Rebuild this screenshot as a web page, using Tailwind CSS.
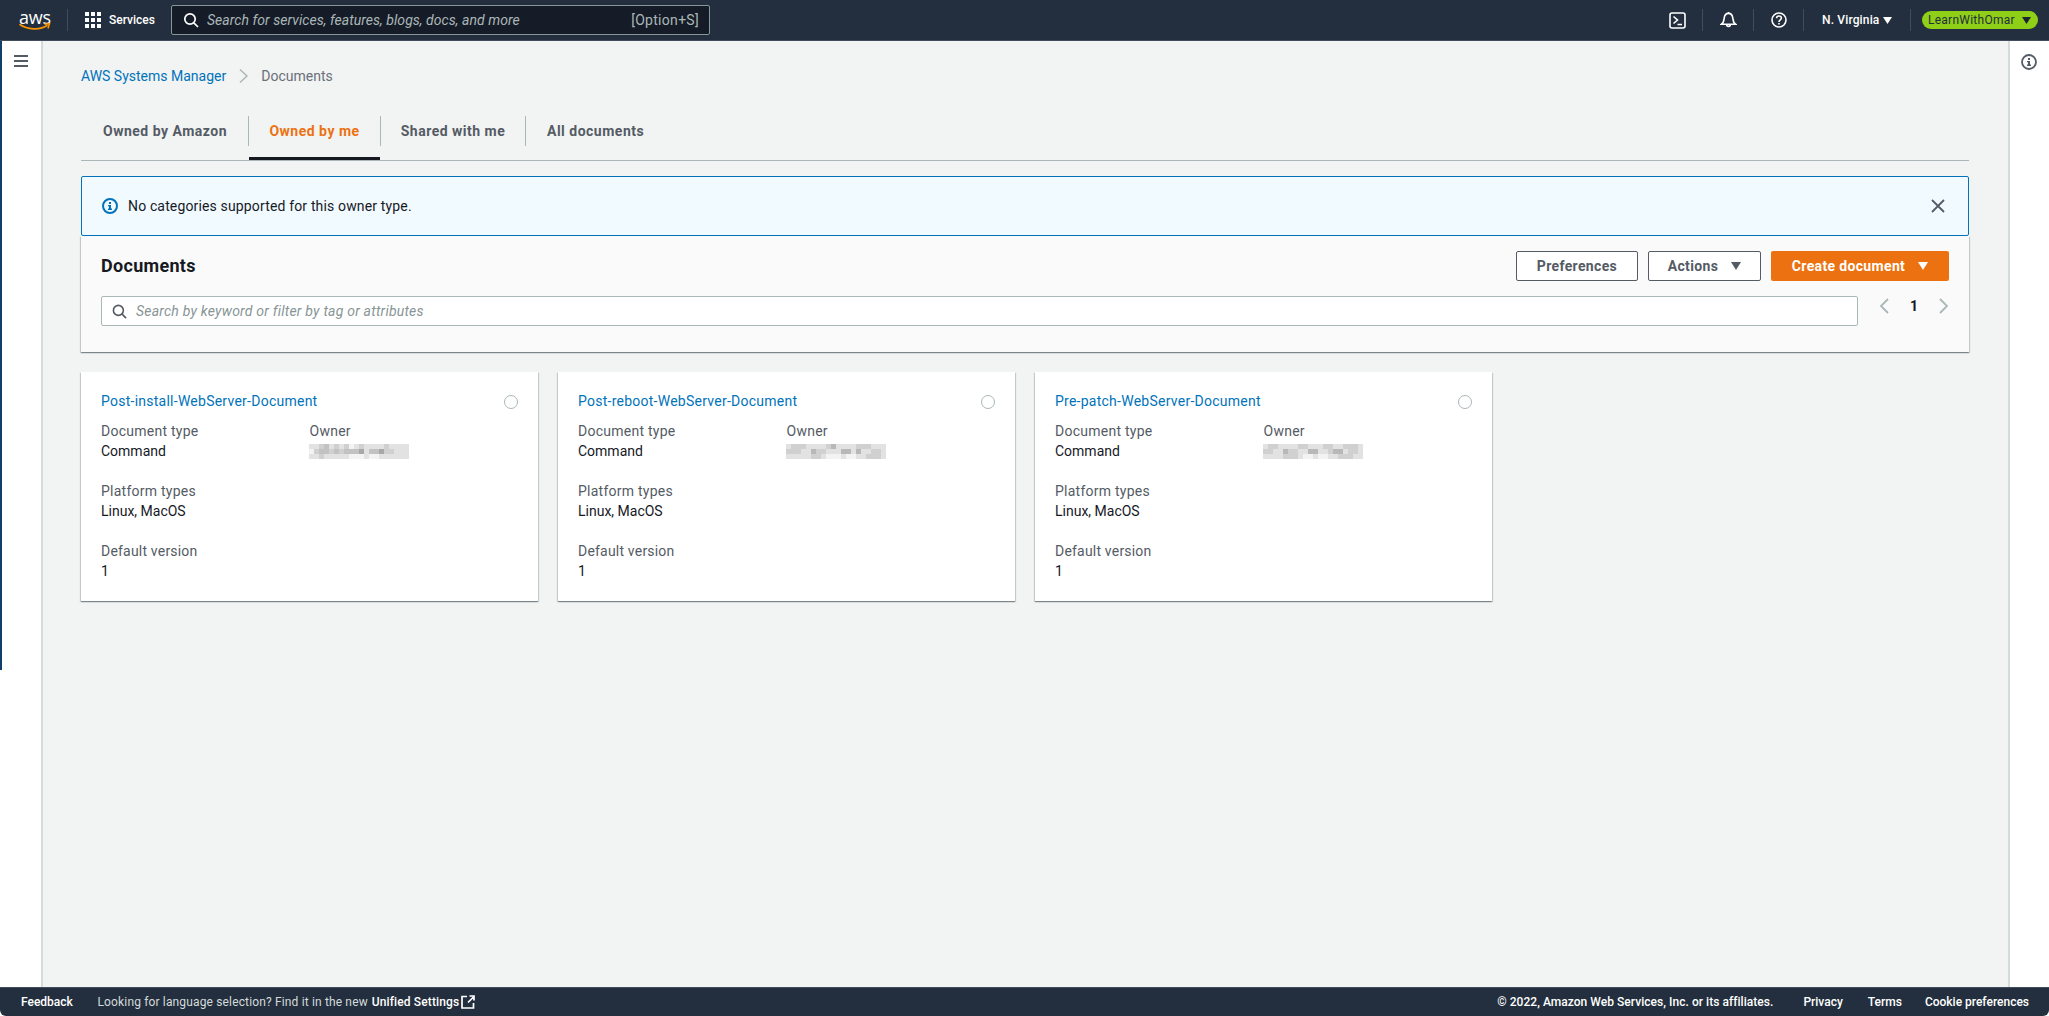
<!DOCTYPE html>
<html lang="en">
<head>
<meta charset="utf-8">
<title>Documents</title>
<script src="https://cdn.jsdelivr.net/npm/@tailwindcss/browser@4"></script>
</head>
<body class="h-screen overflow-hidden bg-white font-['Roboto',sans-serif] text-[14px] leading-[20px] text-[#16191f]">
<div class="flex h-[1016px] flex-col">
  <!-- top bar -->
  <header class="flex h-[41px] shrink-0 items-center border-b border-[#414d5c] bg-[#232f3e] text-[12px] text-white">
    <div class="relative ml-[19px] h-[22px] w-[32px]">
      <span class="block text-center font-['Open_Sans',sans-serif] text-[18px] font-normal leading-[17px] tracking-[-0.2px] text-white">aws</span>
      <svg class="absolute left-0 top-[14px]" width="32" height="8" viewBox="0 0 32 8" fill="none"><path d="M0.5 1.2C8 6.8 21 7.5 28.5 2.3" stroke="#f79400" stroke-width="1.8"/><path d="M25.5 1.2L30.5 0.8L29 5.4" stroke="#f79400" stroke-width="1.5"/></svg>
    </div>
    <div class="ml-[16px] h-[22px] w-px bg-[#414d5c]"></div>
    <svg class="ml-[17px]" width="16" height="16" viewBox="0 0 16 16" fill="#fff"><rect x="0" y="0" width="4" height="4"/><rect x="6" y="0" width="4" height="4"/><rect x="12" y="0" width="4" height="4"/><rect x="0" y="6" width="4" height="4"/><rect x="6" y="6" width="4" height="4"/><rect x="12" y="6" width="4" height="4"/><rect x="0" y="12" width="4" height="4"/><rect x="6" y="12" width="4" height="4"/><rect x="12" y="12" width="4" height="4"/></svg>
    <span class="ml-[8px] w-[62px] font-medium">Services</span>
    <div class="flex h-[30px] w-[539px] items-center rounded-[2px] border border-[#879596] bg-[#161c27] pl-[11px] pr-[10px] text-[14px] text-[#aab7b8]">
      <svg width="16" height="16" viewBox="0 0 16 16" fill="none" stroke="#fff" stroke-width="1.7"><circle cx="7" cy="7" r="5.2"/><path d="M10.8 10.8L15 15"/></svg>
      <span class="ml-[8px] flex-1 italic tracking-[0.05px]">Search for services, features, blogs, docs, and more</span>
      <span class="tracking-[0.3px]">[Option+S]</span>
    </div>
    <div class="flex-1"></div>
    <svg width="17" height="17" viewBox="0 0 17 17" fill="none" stroke="#fff" stroke-width="1.6"><rect x="1" y="1" width="15" height="15" rx="2"/><path d="M4.5 4.5L8.5 8L4.5 11.5M8.5 12.5H13"/></svg>
    <div class="ml-[16px] h-[22px] w-px bg-[#414d5c]"></div>
    <svg class="ml-[17px]" width="17" height="18" viewBox="0 0 18 18" fill="none" stroke="#fff" stroke-width="1.7"><path d="M1.5 13.5C4 12 4 9.5 4.4 7C4.9 3.8 6.6 2 9 2s4.100 1.800 4.600 5C14 9.500 14 12 16.500 13.500Z"/><path d="M7 13.800a2 2 0 1 0 4 0"/><path d="M9 0.500V2"/></svg>
    <div class="ml-[16px] h-[22px] w-px bg-[#414d5c]"></div>
    <svg class="ml-[17px]" width="16" height="16" viewBox="0 0 16 16" fill="none" stroke="#fff" stroke-width="1.600"><circle cx="8" cy="8" r="7"/><path d="M5.600 6.200C5.600 4.800 6.700 4 8 4s2.400.8 2.400 2.100C10.400 8 8 7.900 8 10"/><path d="M8 11v1.600"/></svg>
    <div class="ml-[16px] h-[22px] w-px bg-[#414d5c]"></div>
    <span class="ml-[18px] w-[55px] whitespace-nowrap font-medium tracking-[0.15px]">N. Virginia</span>
    <svg class="ml-[6px]" width="9" height="7" viewBox="0 0 9 7" fill="#fff"><path d="M0 0h9L4.500 7Z"/></svg>
    <div class="ml-[18px] h-[22px] w-px bg-[#414d5c]"></div>
    <div class="ml-[11px] mr-[11px] flex h-[18px] w-[116px] items-center rounded-full bg-[#8fcf17] pl-[6px] text-[12px] font-normal tracking-[0.25px] text-[#232f3e]">
      <span>LearnWithOmar</span>
      <svg class="ml-[7px]" width="9" height="7" viewBox="0 0 9 7" fill="#1b2533"><path d="M0 0h9L4.500 7Z"/></svg>
    </div>
  </header>

  <div class="flex min-h-0 flex-1">
    <!-- left rail -->
    <aside class="relative w-[43px] shrink-0 border-r-2 border-[#d5dbdb] bg-white">
      <div class="absolute left-0 top-0 h-[629px] w-[1.500px] bg-[#0f3f68]"></div>
      <svg class="ml-[14px] mt-[14px]" width="14" height="12" viewBox="0 0 14 12" fill="#545b64"><rect width="14" height="2"/><rect y="5" width="14" height="2"/><rect y="10" width="14" height="2"/></svg>
    </aside>

    <!-- main -->
    <main class="min-w-0 flex-1 bg-[#f2f3f3] pl-[38px] pr-[39px]">
      <nav class="mt-[25px] flex h-[20px] items-center">
        <a class="text-[#0073bb]">AWS Systems Manager</a>
        <svg class="ml-[13px]" width="9" height="14" viewBox="0 0 9 14" fill="none" stroke="#aab7b8" stroke-width="1.500"><path d="M1 0.500L8 7L1 13.500"/></svg>
        <span class="ml-[13px] text-[#687078]">Documents</span>
      </nav>

      <div class="mt-[29px] flex h-[46px] border-b-[1.500px] border-[#aab7b8] font-bold tracking-[0.5px] text-[#545b64]">
        <div class="flex h-[45px] items-start"><span class="mt-[6px] ml-[22px] w-[145px] whitespace-nowrap">Owned by Amazon</span></div>
        <div class="mt-[1px] h-[30px] w-px bg-[#aab7b8]"></div>
        <div class="flex h-[45px] w-[131px] items-start justify-center border-b-[3px] border-[#16191f]"><span class="mt-[6px] text-[#ec7211]">Owned by me</span></div>
        <div class="mt-[1px] h-[30px] w-px bg-[#aab7b8]"></div>
        <div class="flex h-[45px] w-[144px] items-start justify-center"><span class="mt-[6px]">Shared with me</span></div>
        <div class="mt-[1px] h-[30px] w-px bg-[#aab7b8]"></div>
        <div class="flex h-[45px] items-start"><span class="mt-[6px] ml-[21px]">All documents</span></div>
      </div>

      <div class="mt-[15px] flex h-[60px] items-center rounded-[2px] border border-[#0073bb] bg-[#f1faff] pl-[20px] pr-[23px]">
        <svg width="16" height="16" viewBox="0 0 16 16" fill="none"><circle cx="8" cy="8" r="7" stroke="#0073bb" stroke-width="2"/><rect x="7" y="7" width="2" height="4.500" fill="#0073bb"/><rect x="6" y="10.500" width="4" height="1.500" fill="#0073bb"/><rect x="6" y="7" width="2" height="1.300" fill="#0073bb"/><rect x="7" y="4" width="2" height="2" fill="#0073bb"/></svg>
        <span class="ml-[10px] flex-1 tracking-[0.15px]">No categories supported for this owner type.</span>
        <svg width="14" height="14" viewBox="0 0 14 14" fill="none" stroke="#545b64" stroke-width="1.800"><path d="M1 1L13 13M13 1L1 13"/></svg>
      </div>

      <section class="h-[116px] bg-[#fafafa] px-[20px] pt-[15px] shadow-[0_1px_1px_0_rgba(0,28,36,0.3),1px_1px_1px_0_rgba(0,28,36,0.15),-1px_1px_1px_0_rgba(0,28,36,0.15)]">
        <div class="flex h-[30px] items-center justify-between">
          <h2 class="text-[18px] leading-[22px] font-bold tracking-[0.3px]">Documents</h2>
          <div class="flex gap-[10px] font-bold tracking-[0.35px]">
            <button class="flex h-[30px] w-[122px] items-center justify-center rounded-[2px] border border-[#545b64] bg-white text-[#545b64]">Preferences</button>
            <button class="flex h-[30px] w-[113px] items-center justify-center rounded-[2px] border border-[#545b64] bg-white text-[#545b64]">Actions<svg class="ml-[13px]" width="10" height="8" viewBox="0 0 10 8" fill="#545b64"><path d="M0 0h10L5 8Z"/></svg></button>
            <button class="flex h-[30px] w-[178px] items-center justify-center rounded-[2px] bg-[#ec7211] text-white">Create document<svg class="ml-[13px]" width="10" height="8" viewBox="0 0 10 8" fill="#fff"><path d="M0 0h10L5 8Z"/></svg></button>
          </div>
        </div>
        <div class="mt-[15px] flex items-start">
          <div class="flex h-[30px] flex-1 items-center rounded-[2px] border border-[#aab7b8] bg-white pl-[10px] text-[#879596]">
            <svg width="15" height="15" viewBox="0 0 16 16" fill="none" stroke="#545b64" stroke-width="1.700"><circle cx="6.800" cy="6.800" r="5.300"/><path d="M10.800 10.800L15 15"/></svg>
            <span class="ml-[9px] italic tracking-[0.22px]">Search by keyword or filter by tag or attributes</span>
          </div>
          <div class="ml-[21px] flex h-[20px] w-[70px] items-center justify-between">
            <svg width="10" height="16" viewBox="0 0 10 16" fill="none" stroke="#aab7b8" stroke-width="1.800"><path d="M9 1L2 8L9 15"/></svg>
            <span class="font-bold">1</span>
            <svg width="10" height="16" viewBox="0 0 10 16" fill="none" stroke="#aab7b8" stroke-width="1.800"><path d="M1 1L8 8L1 15"/></svg>
          </div>
        </div>
      </section>

      <div class="mt-[20px] grid grid-cols-4 gap-[20px]">
        <article class="h-[229px] bg-white px-[20px] pt-[19px] shadow-[0_1px_1px_0_rgba(0,28,36,0.3),1px_1px_1px_0_rgba(0,28,36,0.15),-1px_1px_1px_0_rgba(0,28,36,0.15)]">
          <div class="flex items-start justify-between"><a class="tracking-[0.25px] text-[#0073bb]">Post-install-WebServer-Document</a><span class="mt-[4px] h-[14px] w-[14px] rounded-full border border-[#aab7b8] bg-white"></span></div>
          <div class="mt-[10px] grid grid-cols-2 gap-x-[0px]">
            <div class="w-[209px]"><div class="tracking-[0.25px] text-[#545b64]">Document type</div><div>Command</div></div>
            <div><div class="tracking-[0.25px] text-[#545b64]">Owner</div>
              <svg class="-ml-[1px] mt-[3px] block" width="100" height="15" viewBox="0 0 100 15" fill="none" stroke-width="5"><rect width="100" height="15" fill="#e2e2e2"/><path stroke="#d0d0d0" d="M10 2.500h10M25 2.500h5M35 2.500h5M50 2.500h5M75 2.500h5M5 7.500h5M20 7.500h5M30 7.500h5M45 7.500h5M75 7.500h10M10 12.500h5"/><path stroke="#c2c2c2" d="M15 2.500h5M10 7.500h10M25 7.500h5M35 7.500h15M60 7.500h10"/><path stroke="#a8a8a8" d="M50 7.500h5M70 7.500h5"/><path stroke="#f3f3f3" d="M0 7.500h5M40 12.500h15M60 12.500h10M40 2.500h5"/></svg></div>
          </div>
          <div class="mt-[20px] tracking-[0.25px] text-[#545b64]">Platform types</div><div>Linux, MacOS</div>
          <div class="mt-[20px] tracking-[0.2px] text-[#545b64]">Default version</div><div>1</div>
        </article>
        <article class="h-[229px] bg-white px-[20px] pt-[19px] shadow-[0_1px_1px_0_rgba(0,28,36,0.3),1px_1px_1px_0_rgba(0,28,36,0.15),-1px_1px_1px_0_rgba(0,28,36,0.15)]">
          <div class="flex items-start justify-between"><a class="tracking-[0.25px] text-[#0073bb]">Post-reboot-WebServer-Document</a><span class="mt-[4px] h-[14px] w-[14px] rounded-full border border-[#aab7b8] bg-white"></span></div>
          <div class="mt-[10px] grid grid-cols-2">
            <div class="w-[209px]"><div class="tracking-[0.25px] text-[#545b64]">Document type</div><div>Command</div></div>
            <div><div class="tracking-[0.25px] text-[#545b64]">Owner</div>
              <svg class="-ml-[1px] mt-[3px] block" width="100" height="15" viewBox="0 0 100 15" fill="none" stroke-width="5"><rect width="100" height="15" fill="#e2e2e2"/><path stroke="#d0d0d0" d="M5 2.500h15M40 2.500h10M70 2.500h15M0 7.500h15M30 7.500h10M85 7.500h10M25 12.500h10M80 12.500h15"/><path stroke="#b8b8b8" d="M25 7.500h5M55 7.500h10M45 2.500h5M70 7.500h5"/><path stroke="#f3f3f3" d="M40 12.500h15M60 12.500h10"/></svg></div>
          </div>
          <div class="mt-[20px] tracking-[0.25px] text-[#545b64]">Platform types</div><div>Linux, MacOS</div>
          <div class="mt-[20px] tracking-[0.2px] text-[#545b64]">Default version</div><div>1</div>
        </article>
        <article class="h-[229px] bg-white px-[20px] pt-[19px] shadow-[0_1px_1px_0_rgba(0,28,36,0.3),1px_1px_1px_0_rgba(0,28,36,0.15),-1px_1px_1px_0_rgba(0,28,36,0.15)]">
          <div class="flex items-start justify-between"><a class="tracking-[0.25px] text-[#0073bb]">Pre-patch-WebServer-Document</a><span class="mt-[4px] h-[14px] w-[14px] rounded-full border border-[#aab7b8] bg-white"></span></div>
          <div class="mt-[10px] grid grid-cols-2">
            <div class="w-[209px]"><div class="tracking-[0.25px] text-[#545b64]">Document type</div><div>Command</div></div>
            <div><div class="tracking-[0.25px] text-[#545b64]">Owner</div>
              <svg class="-ml-[1px] mt-[3px] block" width="100" height="15" viewBox="0 0 100 15" fill="none" stroke-width="5"><rect width="100" height="15" fill="#e2e2e2"/><path stroke="#d0d0d0" d="M5 2.500h10M35 2.500h10M60 2.500h10M80 2.500h15M0 7.500h10M25 7.500h10M65 7.500h5M85 7.500h10M20 12.500h15M75 12.500h15"/><path stroke="#b8b8b8" d="M20 7.500h5M45 7.500h10M70 7.500h10"/><path stroke="#f3f3f3" d="M40 12.500h10M55 12.500h10"/></svg></div>
          </div>
          <div class="mt-[20px] tracking-[0.25px] text-[#545b64]">Platform types</div><div>Linux, MacOS</div>
          <div class="mt-[20px] tracking-[0.2px] text-[#545b64]">Default version</div><div>1</div>
        </article>
      </div>
    </main>

    <!-- right rail -->
    <aside class="w-[41px] shrink-0 border-l-2 border-[#d5dbdb] bg-white">
      <svg class="ml-[11px] mt-[13px]" width="16" height="16" viewBox="0 0 16 16" fill="none"><circle cx="8" cy="8" r="7" stroke="#545b64" stroke-width="1.800"/><rect x="7" y="7" width="2" height="4.500" fill="#545b64"/><rect x="6" y="10.500" width="4" height="1.500" fill="#545b64"/><rect x="6" y="7" width="2" height="1.300" fill="#545b64"/><rect x="7" y="4" width="2" height="2" fill="#545b64"/></svg>
    </aside>
  </div>

  <!-- footer -->
  <footer class="flex h-[29px] shrink-0 items-center rounded-b-[6px] border-t border-[#414d5c] bg-[#232f3e] pl-[21px] pr-[20px] text-[12px] text-white">
    <span class="w-[76.500px] font-medium">Feedback</span>
    <span class="tracking-[0.15px] text-[#d5dbdb]">Looking for language selection? Find it in the new</span>
    <span class="ml-[4px] font-medium tracking-[0.12px]">Unified Settings</span>
    <svg class="ml-[2px]" width="14" height="14" viewBox="0 0 14 14" fill="none" stroke="#fff" stroke-width="1.700"><path d="M6 1.500H1V13H12.500V8M7 7.500L13 1.500M8.500 1H13V5.500"/></svg>
    <span class="flex-1"></span>
    <span class="font-medium tracking-[0.04px]">© 2022, Amazon Web Services, Inc. or its affiliates.</span>
    <span class="ml-[30px] font-medium">Privacy</span>
    <span class="ml-[25px] font-medium">Terms</span>
    <span class="ml-[23px] font-medium">Cookie preferences</span>
  </footer>
</div>
</body>
</html>
